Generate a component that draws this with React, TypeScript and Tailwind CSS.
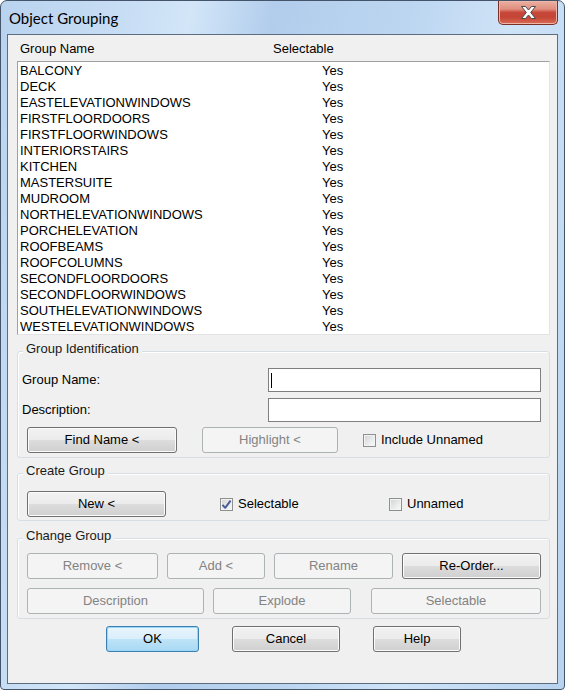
import React from "react";

const rows = [
  "BALCONY",
  "DECK",
  "EASTELEVATIONWINDOWS",
  "FIRSTFLOORDOORS",
  "FIRSTFLOORWINDOWS",
  "INTERIORSTAIRS",
  "KITCHEN",
  "MASTERSUITE",
  "MUDROOM",
  "NORTHELEVATIONWINDOWS",
  "PORCHELEVATION",
  "ROOFBEAMS",
  "ROOFCOLUMNS",
  "SECONDFLOORDOORS",
  "SECONDFLOORWINDOWS",
  "SOUTHELEVATIONWINDOWS",
  "WESTELEVATIONWINDOWS",
];

type BtnProps = {
  className: string;
  children: React.ReactNode;
  disabled?: boolean;
  def?: boolean;
};

function Btn({ className, children, disabled, def }: BtnProps) {
  let look =
    "border-[#707070] bg-[linear-gradient(#f2f2f2_0%,#ebebeb_50%,#dddddd_50%,#cfcfcf_100%)] shadow-[inset_0_0_0_1px_#fbfbfb] text-black";
  if (disabled) look = "border-[#adb2b5] bg-[#f4f4f4] text-[#838383]";
  if (def)
    look =
      "border-[#3c7fb1] bg-[linear-gradient(#e9f5fc_0%,#d9eefb_50%,#bee4f8_50%,#a9d8f3_100%)] shadow-[inset_0_0_0_1px_#9ad6f6] text-black";
  return (
    <div
      className={`h-[26px] shrink-0 flex items-center justify-center rounded-[3px] border ${look} ${className}`}
    >
      {children}
    </div>
  );
}

function Check({ checked }: { checked?: boolean }) {
  return (
    <div className="w-[13px] h-[13px] shrink-0 border border-[#8e8f8f] bg-[linear-gradient(135deg,#cfd1d4_0%,#e9eaeb_55%,#fafafa_100%)] shadow-[inset_0_0_0_1px_#f3f3f3] flex items-center justify-center">
      {checked && (
        <svg width="11" height="11" viewBox="0 0 11 11">
          <path
            d="M1.5 5.8 L4.2 8.8 L9.6 1.6"
            fill="none"
            stroke="#4a5e9a"
            strokeWidth="2"
            strokeLinejoin="round"
          />
        </svg>
      )}
    </div>
  );
}

function GroupBox({
  label,
  className,
  children,
}: {
  label: string;
  className: string;
  children: React.ReactNode;
}) {
  return (
    <div
      className={`relative ml-[9px] w-[533px] rounded-[3px] border border-[#d5dfe5] shadow-[inset_1px_1px_0_#ffffff] ${className}`}
    >
      <div className="absolute left-[5px] top-[-11px] px-[3px] leading-[16px] bg-[#f0f0f0] text-[#1a1a1a]">
        {label}
      </div>
      {children}
    </div>
  );
}

export default function App() {
  return (
    <div className="w-[565px] h-[690px] bg-white font-['Liberation_Sans',Arial,sans-serif] text-[13px] text-black">
      <div className="h-full flex flex-col rounded-t-[7px] rounded-b-[4px] border border-[#44546a] bg-[linear-gradient(100deg,#b9d3ef_0%,#c7ddf4_18%,#d3e6f8_28%,#b2cdec_40%,#bcd6f1_60%,#cfe3f7_75%,#b8d3ef_100%)] overflow-hidden">
        {/* title bar */}
        <div className="h-[33px] flex justify-between shrink-0">
          <div className="pl-[8px] pt-[7px] leading-[20px] text-[15px] font-['Lato',sans-serif] text-black">
            Object Grouping
          </div>
          <div className="mr-[6px] w-[60px] h-[24px] rounded-b-[5px] border border-t-0 border-[#7a2f28] bg-[linear-gradient(#eab0a2_0%,#e08f7f_35%,#c7473a_50%,#c44536_70%,#d96b55_100%)] shadow-[inset_0_0_0_1px_#eeb6a8] flex items-center justify-center">
            <svg width="17" height="13" viewBox="0 0 17 13">
              <polygon
                points="1.5,0.5 5.5,0.5 8.5,4 11.5,0.5 15.5,0.5 10.7,6.5 15.5,12.5 11.5,12.5 8.5,9 5.5,12.5 1.5,12.5 6.3,6.5"
                fill="#ffffff"
                stroke="#4a4a4a"
                strokeWidth="1"
                strokeLinejoin="round"
              />
            </svg>
          </div>
        </div>

        {/* client */}
        <div className="mx-[6px] h-[650px] shrink-0 border border-[#5d6d81] bg-[#f0f0f0] flex flex-col">
          {/* header */}
          <div className="h-[26px] flex items-center pl-[12px] pt-[1px] shrink-0">
            <div className="w-[253px]">Group Name</div>
            <div>Selectable</div>
          </div>

          {/* list */}
          <div className="ml-[9px] w-[533px] h-[274px] shrink-0 overflow-hidden bg-white border border-t-[#a0a0a0] border-l-[#a0a0a0] border-r-[#e3e3e3] border-b-[#e3e3e3]">
            {rows.map((r) => (
              <div key={r} className="h-[16px] leading-[17px] flex pl-[2px]">
                <div className="w-[302px]">{r}</div>
                <div>Yes</div>
              </div>
            ))}
          </div>

          {/* Group Identification */}
          <GroupBox label="Group Identification" className="mt-[16px] h-[107px] pt-[16px]">
            <div className="flex items-center h-[24px]">
              <div className="w-[250px] pl-[4px]">Group Name:</div>
              <div className="w-[273px] h-[24px] border border-[#7f7f7f] bg-white flex items-center">
                <div className="ml-[2px] w-[1px] h-[15px] bg-black" />
              </div>
            </div>
            <div className="flex items-center h-[24px] mt-[6px]">
              <div className="w-[250px] pl-[4px]">Description:</div>
              <div className="w-[273px] h-[24px] border border-[#7f7f7f] bg-white" />
            </div>
            <div className="flex items-center mt-[5px]">
              <Btn className="ml-[9px] w-[150px]">Find Name &lt;</Btn>
              <Btn className="ml-[25px] w-[136px]" disabled>
                Highlight &lt;
              </Btn>
              <div className="ml-[25px]">
                <Check />
              </div>
              <div className="ml-[5px]">Include Unnamed</div>
            </div>
          </GroupBox>

          {/* Create Group */}
          <GroupBox label="Create Group" className="mt-[15px] h-[48px] pt-[17px]">
            <div className="flex items-center">
              <Btn className="ml-[9px] w-[139px]">New &lt;</Btn>
              <div className="ml-[54px] w-[169px] flex items-center">
                <Check checked />
                <div className="ml-[5px]">Selectable</div>
              </div>
              <div className="flex items-center">
                <Check />
                <div className="ml-[5px]">Unnamed</div>
              </div>
            </div>
          </GroupBox>

          {/* Change Group */}
          <GroupBox label="Change Group" className="mt-[17px] h-[81px] pt-[14px]">
            <div className="flex gap-[9px] pl-[9px]">
              <Btn className="w-[131px]" disabled>
                Remove &lt;
              </Btn>
              <Btn className="w-[98px]" disabled>
                Add &lt;
              </Btn>
              <Btn className="w-[119px]" disabled>
                Rename
              </Btn>
              <Btn className="w-[139px]">Re-Order...</Btn>
            </div>
            <div className="flex pl-[9px] mt-[9px]">
              <Btn className="w-[177px]" disabled>
                Description
              </Btn>
              <Btn className="ml-[9px] w-[138px]" disabled>
                Explode
              </Btn>
              <Btn className="ml-[20px] w-[170px]" disabled>
                Selectable
              </Btn>
            </div>
          </GroupBox>

          {/* bottom buttons */}
          <div className="flex mt-[7px]">
            <Btn className="ml-[98px] w-[93px]" def>
              OK
            </Btn>
            <Btn className="ml-[33px] w-[108px]">Cancel</Btn>
            <Btn className="ml-[33px] w-[88px]">Help</Btn>
          </div>
        </div>
      </div>
    </div>
  );
}
